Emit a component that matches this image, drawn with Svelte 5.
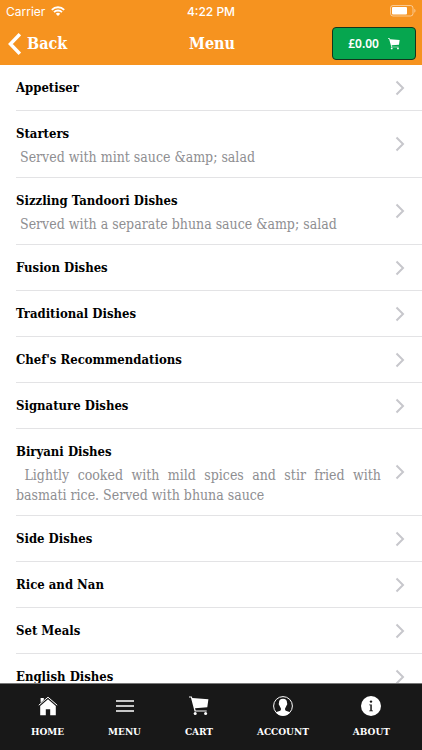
<script>
	const categories = [
		{ name: 'Appetiser' },
		{ name: 'Starters', description: 'Served with mint sauce &amp; salad' },
		{ name: 'Sizzling Tandoori Dishes', description: 'Served with a separate bhuna sauce &amp; salad' },
		{ name: 'Fusion Dishes' },
		{ name: 'Traditional Dishes' },
		{ name: "Chef's Recommendations" },
		{ name: 'Signature Dishes' },
		{
			name: 'Biryani Dishes',
			description: 'Lightly cooked with mild spices and stir fried with basmati rice. Served with bhuna sauce'
		},
		{ name: 'Side Dishes' },
		{ name: 'Rice and Nan' },
		{ name: 'Set Meals' },
		{ name: 'English Dishes' }
	];

	const tabs = ['home', 'menu', 'cart', 'account', 'about'];
</script>

{#snippet cart()}
	<path d="M0 .4h2.8l.5 1.6L19.4 3.2l-1.1 8L6 12.2l.7 2.3h11v1H5.6L1.9 1.5H0z" />
	<circle cx="6.2" cy="17.4" r="1.5" />
	<circle cx="16.6" cy="17.4" r="1.5" />
{/snippet}

<div class="app">
	<header>
		<div class="status">
			<span class="carrier">
				Carrier
				<svg width="14" height="10" viewBox="0 0 14 10" fill="none" stroke="currentColor" stroke-width="1.8">
					<path d="M.8 3.8a8.8 8.8 0 0 1 12.4 0M3 6.2a5.6 5.6 0 0 1 8 0" />
					<path d="M7 10 4.8 7.8a3.1 3.1 0 0 1 4.4 0z" fill="currentColor" stroke="none" />
				</svg>
			</span>
			<span class="time">4:22 PM</span>
			<svg class="battery" width="26" height="12" viewBox="0 0 26 12">
				<rect x=".5" y=".5" width="22.5" height="10.5" rx="2.5" fill="none" stroke="#fff" stroke-opacity=".5" />
				<rect x="2" y="2" width="15" height="7.5" rx="1" fill="#fff" />
				<path d="M24.3 3.8c1.6.8 1.6 3.2 0 4z" fill="#fff" fill-opacity=".5" />
			</svg>
		</div>
		<div class="navbar">
			<button class="back">
				<svg width="13" height="22" viewBox="0 0 13 22" fill="none" stroke="currentColor" stroke-width="3.4">
					<path d="M11.8 1.2 2.4 11l9.4 9.8" />
				</svg>
				Back
			</button>
			<h1>Menu</h1>
			<button class="basket">
				£0.00
				<svg width="12" height="12" viewBox="0 0 20 20" fill="currentColor">
					{@render cart()}
				</svg>
			</button>
		</div>
	</header>

	<main>
		<ul>
			{#each categories as category}
				<li>
					<a href="#menu">
						<div class="text" class:detailed={category.description}>
							<h2>{category.name}</h2>
							{#if category.description}
								<p>&nbsp;{category.description}</p>
							{/if}
						</div>
						<svg width="10" height="16" viewBox="0 0 10 16" fill="none" stroke="#c7c7cc" stroke-width="2">
							<path d="m1.5 1.5 6.5 6.5-6.5 6.5" />
						</svg>
					</a>
				</li>
			{/each}
		</ul>
	</main>

	<nav>
		{#each tabs as tab}
			<a href="#{tab}">
				<svg width="20" height="20" viewBox="0 0 20 20" fill="currentColor">
					{#if tab === 'home'}
						<path d="M.8 9.2 10 1.2l9.2 8" fill="none" stroke="currentColor" stroke-width="1" />
						<path d="M2.6 2h3.2v2L2.6 6.8z" />
						<path d="M10 3.2 2.2 10v9.2h5.6v-6h4.4v6h5.6V10z" />
					{:else if tab === 'menu'}
						<path d="M1 5h18M1 10h18M1 15h18" stroke="currentColor" stroke-width="1.6" />
					{:else if tab === 'cart'}
						{@render cart()}
					{:else if tab === 'account'}
						<circle cx="10" cy="10" r="9.4" fill="none" stroke="currentColor" stroke-width="1" />
						<path d="M10 2.8c-2.8 0-4.2 1.8-4 4.3-.5.7-.1 2 .5 2.4.3 1.2.8 2.1 1.4 2.8v1.8c-.5 1-3.6 1.4-5 2.4a9.4 9.4 0 0 0 14.2 0c-1.4-1-4.5-1.4-5-2.4v-1.8c.6-.7 1.1-1.6 1.4-2.8.6-.4 1-1.7.5-2.4.2-2.5-1.2-4.3-4-4.3z" />
					{:else}
						<circle cx="10" cy="10" r="10" />
						<circle cx="10" cy="5.6" r="1.2" fill="#181818" />
						<path d="M8.2 8.4h2.6v6h1.2v.8H8.2v-.8h1.1V9.2H8.2z" fill="#181818" />
					{/if}
				</svg>
				{tab}
			</a>
		{/each}
	</nav>
</div>

<style>
	:global(body) {
		margin: 0;
		background: #fff;
	}

	.app {
		display: flex;
		flex-direction: column;
		height: 100vh;
		font-family: 'DejaVu Serif Condensed', 'DejaVu Serif', serif;
	}

	header {
		flex: none;
		color: #fff;
		background: #f6931f;
	}

	.status {
		display: grid;
		grid-template-columns: 1fr auto 1fr;
		align-items: center;
		height: 22px;
		padding: 0 6px;
		font: 12px Inter, sans-serif;
	}

	.carrier {
		display: flex;
		align-items: center;
		gap: 6px;
	}

	.time {
		font-weight: 500;
	}

	.battery {
		justify-self: end;
	}

	.navbar {
		display: grid;
		grid-template-columns: 1fr auto 1fr;
		align-items: center;
		height: 43px;
		padding: 0 6px 0 8px;
	}

	button {
		display: flex;
		align-items: center;
		padding: 0;
		border: 0;
		color: inherit;
		background: none;
		font-family: inherit;
		cursor: pointer;
	}

	.back {
		gap: 6px;
		font-size: 16px;
		font-weight: bold;
	}

	h1 {
		margin: 0;
		font-size: 16px;
	}

	.basket {
		justify-self: end;
		gap: 9px;
		height: 33px;
		padding: 0 15px;
		border: 1px solid #14351c;
		border-radius: 4px;
		background: #06a64f;
		font-family: 'Noto Sans', sans-serif;
		font-size: 12px;
		font-weight: 600;
	}

	main {
		flex: 1;
		min-height: 0;
		overflow-y: auto;
		scrollbar-width: none;
	}

	ul {
		margin: 0;
		padding: 0 0 0 16px;
		list-style: none;
	}

	li {
		border-bottom: 1px solid #e3e3e5;
	}

	li a {
		display: flex;
		align-items: center;
		gap: 14px;
		padding-right: 17px;
		color: #000;
		text-decoration: none;
	}

	.text {
		flex: 1;
		padding: 13px 0 12px;
	}

	.text.detailed {
		padding-bottom: 10px;
	}

	h2 {
		margin: 0;
		font-size: 13px;
		line-height: 20px;
	}

	p {
		margin: 3px 0 0;
		color: #8e8e91;
		font-size: 14px;
		line-height: 20px;
		text-align: justify;
	}

	li svg {
		flex: none;
	}

	nav {
		display: flex;
		flex: none;
		justify-content: space-between;
		height: 66px;
		padding: 0 32px 0 31px;
		border-top: 1px solid #777;
		background: #181818;
	}

	nav a {
		display: flex;
		flex-direction: column;
		align-items: center;
		gap: 9px;
		padding-top: 12px;
		color: #fff;
		font-size: 10px;
		font-weight: bold;
		line-height: 14px;
		text-decoration: none;
		text-transform: uppercase;
	}
</style>
